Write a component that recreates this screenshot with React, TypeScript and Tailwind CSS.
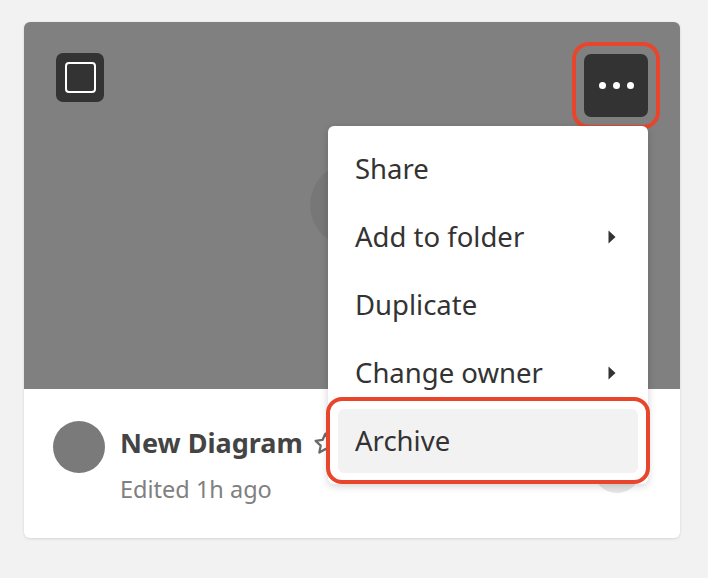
import React from "react";

function Arrow() {
  return (
    <svg width="8" height="14" viewBox="0 0 8 14" className="shrink-0">
      <path d="M0.5 0.5 L7.5 7 L0.5 13.5 Z" fill="#333333" />
    </svg>
  );
}

function Item({ label, arrow, active }: { label: string; arrow?: boolean; active?: boolean }) {
  return (
    <div
      className={
        "relative flex h-16 items-center justify-between rounded-[6px] pl-[17px] pr-[22px] " +
        (active ? "bg-[#f2f2f2]" : "")
      }
    >
      <span className="text-[27.5px] leading-none text-[#333333]">{label}</span>
      {arrow && <Arrow />}
      {active && (
        <div className="pointer-events-none absolute -inset-x-[12px] -top-[12px] -bottom-[11px] rounded-[16px] border-[4px] border-[#e8452c]" />
      )}
    </div>
  );
}

export default function App() {
  return (
    <div
      className="min-h-[578px] w-[708px] bg-[#f2f2f2] pl-[24px] pt-[22px]"
      style={{ fontFamily: "'Noto Sans', 'Open Sans', sans-serif" }}
    >
      <div className="relative w-[656px] h-[516px] overflow-visible rounded-[6px] bg-white shadow-[0_1px_3px_rgba(0,0,0,0.12)]">
        {/* thumbnail */}
        <div className="relative h-[367px] rounded-t-[6px] bg-[#808080]">
          <div className="absolute left-[32px] top-[31px] flex h-[49px] w-[48px] items-center justify-center rounded-[7px] bg-[#333333]">
            <div className="h-[31px] w-[31px] rounded-[4px] border-2 border-white" />
          </div>
          <div className="absolute left-[286px] top-[141px] h-[84px] w-[84px] rounded-full bg-[#777777]" />
          <div className="absolute left-[560px] top-[32px] flex h-[63px] w-[64px] items-center justify-center gap-[7px] rounded-[7px] bg-[#333333]">
            <span className="h-[7px] w-[7px] rounded-full bg-white" />
            <span className="h-[7px] w-[7px] rounded-full bg-white" />
            <span className="h-[7px] w-[7px] rounded-full bg-white" />
            <div className="pointer-events-none absolute -inset-[12px] rounded-[17px] border-[4px] border-[#e8452c]" />
          </div>
        </div>
        {/* footer */}
        <div className="relative flex items-start gap-[15px] pl-[29px] pt-[32px]">
          <div className="h-[52px] w-[52px] shrink-0 rounded-full bg-[#7a7a7a]" />
          <div className="flex flex-col pt-[4px]">
            <div className="flex items-center gap-[10px]">
              <span className="text-[27px] font-bold leading-[36px] text-[#444444]">New Diagram</span>
              <svg width="25" height="25" viewBox="0 0 24 24" fill="none" stroke="#6b6b6b" strokeWidth="2.2" strokeLinejoin="round">
                <path d="M12 2.5l2.9 6.1 6.6.8-4.9 4.6 1.3 6.6L12 17.3 6.1 20.6l1.3-6.6-4.9-4.6 6.6-.8z" />
              </svg>
            </div>
            <span className="mt-[14px] text-[23.5px] leading-[28px] text-[#808080]">Edited 1h ago</span>
          </div>
          <div className="absolute left-[569px] top-[56px] h-[48px] w-[48px] rounded-full bg-[#e6e6e6]" />
        </div>
        {/* menu */}
        <div className="absolute left-[304px] top-[104px] flex w-[320px] flex-col gap-[4px] rounded-[6px] bg-white px-[10px] py-[11px] shadow-[0_2px_8px_rgba(0,0,0,0.18)]">
          <Item label="Share" />
          <Item label="Add to folder" arrow />
          <Item label="Duplicate" />
          <Item label="Change owner" arrow />
          <Item label="Archive" active />
        </div>
      </div>
    </div>
  );
}
